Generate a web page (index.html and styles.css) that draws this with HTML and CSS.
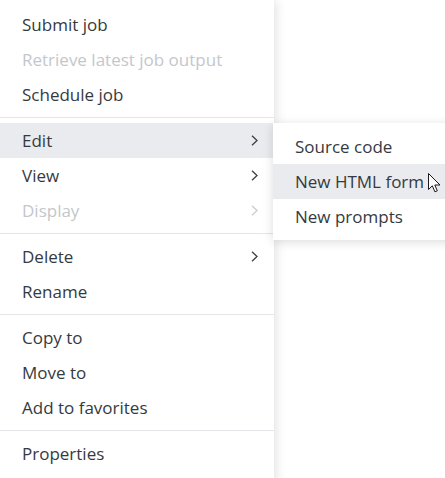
FILE: index.html
```html
<!DOCTYPE html>
<html>
<head>
<meta charset="utf-8">
<link rel="stylesheet" href="styles.css">
</head>
<body>
<div class="stage">
  <div class="menu">
    <div class="group">
      <div class="item">Submit job</div>
      <div class="item disabled">Retrieve latest job output</div>
      <div class="item">Schedule job</div>
    </div>
    <div class="group">
      <div class="item active">Edit<svg class="chev" viewBox="0 0 7 11"><path d="M1 0.8 L6 5.5 L1 10.2" /></svg></div>
      <div class="item">View<svg class="chev" viewBox="0 0 7 11"><path d="M1 0.8 L6 5.5 L1 10.2" /></svg></div>
      <div class="item disabled">Display<svg class="chev" viewBox="0 0 7 11"><path d="M1 0.8 L6 5.5 L1 10.2" /></svg></div>
    </div>
    <div class="group">
      <div class="item">Delete<svg class="chev" viewBox="0 0 7 11"><path d="M1 0.8 L6 5.5 L1 10.2" /></svg></div>
      <div class="item">Rename</div>
    </div>
    <div class="group">
      <div class="item">Copy to</div>
      <div class="item">Move to</div>
      <div class="item">Add to favorites</div>
    </div>
    <div class="group">
      <div class="item">Properties</div>
    </div>
  </div>
  <div class="submenu">
    <div class="item">Source code</div>
    <div class="item active">New HTML form</div>
    <div class="item">New prompts</div>
  </div>
  <svg class="cursor" viewBox="0 0 13 20"><path d="M0.5 0.5 L0.5 16.5 L4.3 12.8 L6.9 18.8 L9.3 17.8 L6.8 12 L12 12 Z" /></svg>
</div>
</body>
</html>
```

FILE: styles.css
```css
* { box-sizing: border-box; }
html, body {
  margin: 0;
  padding: 0;
  background: #ffffff;
}
body {
  font-family: "Open Sans", "Noto Sans", sans-serif;
  font-size: 17px;
  color: #353a41;
  overflow: hidden;
}
.stage {
  position: relative;
  width: 445px;
  height: 478px;
  overflow: hidden;
}
.menu {
  width: 274px;
  background: #fff;
  box-shadow: 2px 0 10px rgba(0,0,0,0.12);
  padding-top: 2px;
  padding-bottom: 10px;
}
.group {
  padding: 5px 0;
  border-bottom: 1px solid #e3e5e8;
}
.group:last-child { border-bottom: none; }
.item {
  height: 35px;
  display: flex;
  align-items: center;
  justify-content: space-between;
  padding: 0 16px 0 22px;
  white-space: nowrap;
}
.item.active { background: #e9ebee; }
.item.disabled { color: #c3c7cc; }
.chev {
  width: 7px;
  height: 11px;
  fill: none;
  stroke: #3a3f46;
  stroke-width: 1.3;
}
.item.disabled .chev { stroke: #c9ccd0; }
.submenu {
  position: absolute;
  left: 273px;
  top: 123px;
  width: 200px;
  background: #fff;
  padding: 6px 0;
  box-shadow: 0 2px 10px rgba(0,0,0,0.14);
}
.submenu .item { padding-left: 22px; }
.cursor {
  position: absolute;
  left: 428px;
  top: 173px;
  width: 13px;
  height: 20px;
  fill: #fff;
  stroke: #1a1a1a;
  stroke-width: 1;
  stroke-linejoin: round;
}
```
